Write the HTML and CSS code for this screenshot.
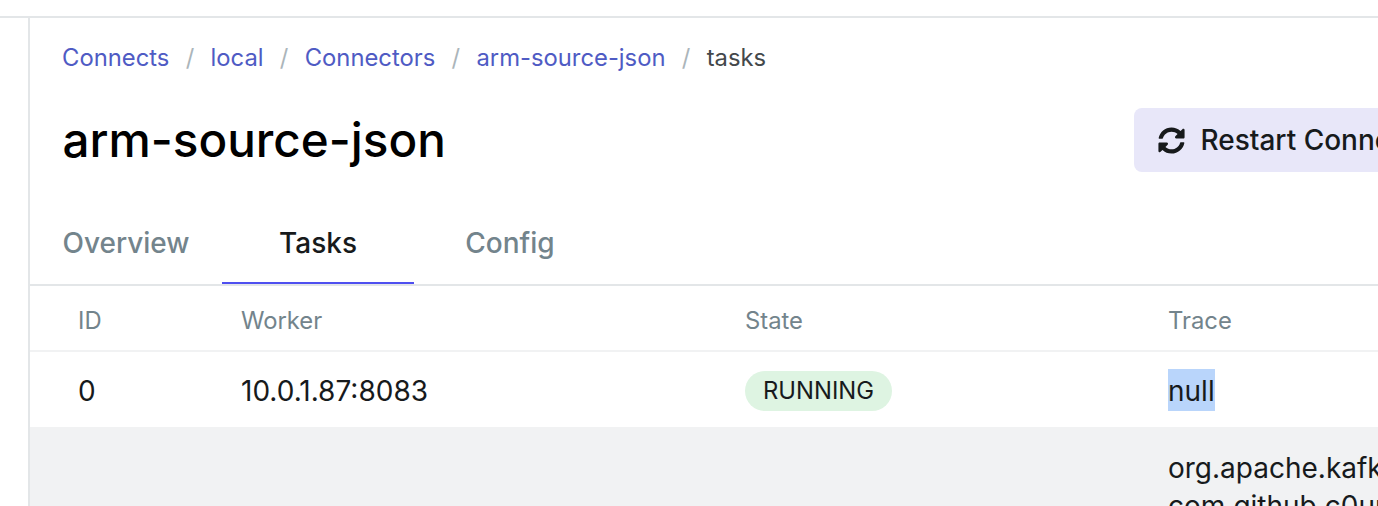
FILE: index.html
```html
<!DOCTYPE html>
<html>

<head>
    <meta charset="utf-8" />
    <title>arm-source-json tasks</title>
    <link rel="stylesheet" href="styles.css">
</head>

<body>
    <div class="top-bar"></div>
    <div class="layout">
        <div class="side"></div>
        <main class="content">
            <nav class="breadcrumb">
                <a href="#">Connects</a><span class="sep">/</span>
                <a href="#">local</a><span class="sep">/</span>
                <a href="#">Connectors</a><span class="sep">/</span>
                <a href="#">arm-source-json</a><span class="sep">/</span>
                <span class="current">tasks</span>
            </nav>
            <div class="page-head">
                <h1>arm-source-json</h1>
                <button class="btn-restart" type="button">
                    <svg class="icon" viewBox="0 0 512 512" width="27" height="27">
                        <path fill="currentColor" d="M370.72 133.28C339.458 104.008 298.888 87.962 255.848 88c-77.458.068-144.328 53.178-162.791 126.85-1.344 5.363-6.122 9.15-11.651 9.15H24.103c-7.498 0-13.194-6.807-11.807-14.176C33.933 94.924 134.813 8 256 8c66.448 0 126.791 26.136 171.315 68.685L463.03 40.97C478.149 25.851 504 36.559 504 57.941V192c0 13.255-10.745 24-24 24H345.941c-21.382 0-32.09-25.851-16.971-40.971l41.75-41.749zM32 296h134.059c21.382 0 32.09 25.851 16.971 40.971l-41.75 41.75c31.262 29.273 71.835 45.319 114.876 45.28 77.418-.07 144.315-53.144 162.787-126.849 1.344-5.363 6.122-9.15 11.651-9.15h57.304c7.498 0 13.194 6.807 11.807 14.176C478.067 417.076 377.187 504 256 504c-66.448 0-126.791-26.136-171.315-68.685L48.97 471.03C33.851 486.149 8 475.441 8 454.059V320c0-13.255 10.745-24 24-24z"/>
                    </svg>
                    Restart Connector
                </button>
            </div>
            <div class="tabs">
                <a class="tab" href="#">Overview</a>
                <a class="tab active" href="#">Tasks</a>
                <a class="tab" href="#">Config</a>
            </div>
            <table class="tasks">
                <thead>
                    <tr>
                        <th class="col-id">ID</th>
                        <th class="col-worker">Worker</th>
                        <th class="col-state">State</th>
                        <th>Trace</th>
                    </tr>
                </thead>
                <tbody>
                    <tr class="task-row">
                        <td>0</td>
                        <td>10.0.1.87:8083</td>
                        <td><span class="tag">RUNNING</span></td>
                        <td><span class="selected">null</span></td>
                    </tr>
                    <tr class="trace-row">
                        <td colspan="3"></td>
                        <td class="trace">org.apache.kafka.connect.errors.ConnectException<br>com.github.c0urante.kafka.connect</td>
                    </tr>
                </tbody>
            </table>
        </main>
    </div>
</body>

</html>
```

FILE: styles.css
```css
html,
body {
    margin: 0;
    height: 100%;
    overflow: hidden;
}

body {
    background-color: white;
    font-family: Inter, "Liberation Sans", sans-serif;
    color: #171a1c;
}

.top-bar {
    height: 16px;
    border-bottom: 2px solid #e3e6e8;
}

.layout {
    display: flex;
    height: 488px;
}

.side {
    width: 28px;
    flex: none;
    border-right: 2px solid #e3e6e8;
}

.content {
    flex: 1;
    min-width: 0;
}

.breadcrumb {
    display: flex;
    align-items: center;
    padding: 26px 0 0 32px;
    height: 28px;
    font-size: 23.8px;
    line-height: 28px;
}

.breadcrumb a {
    color: #4f5bc4;
    text-decoration: none;
}

.sep {
    color: #abb5ba;
    margin: 0 16.3px;
}

.current {
    color: #44484b;
}

.page-head {
    display: flex;
    justify-content: space-between;
    padding: 36px 0 0 32.5px;
    height: 64px;
}

h1 {
    margin: 0;
    font-size: 47.6px;
    line-height: 64px;
    font-weight: 500;
    color: black;
}

.btn-restart {
    display: flex;
    align-items: center;
    flex: none;
    width: 300px;
    height: 64px;
    margin-right: -56px;
    padding: 0 24px;
    border: 0;
    border-radius: 8px;
    background-color: #e8e7f9;
    color: #171a1c;
    font-family: inherit;
    font-size: 28px;
    font-weight: 500;
    white-space: nowrap;
    overflow: hidden;
}

.icon {
    flex: none;
    margin-right: 15.5px;
}

.tabs {
    display: flex;
    margin-top: 32px;
    height: 80px;
    border-bottom: 2px solid #e3e6e8;
}

.tab {
    width: 192px;
    height: 80px;
    line-height: 78px;
    text-align: center;
    font-size: 28px;
    font-weight: 500;
    color: #73848c;
    text-decoration: none;
    box-sizing: border-box;
}

.tab.active {
    color: #171a1c;
    border-bottom: 2px solid #4f4ff0;
}

.tasks {
    width: 1348px;
    table-layout: fixed;
    border-collapse: collapse;
    font-size: 28px;
}

.col-id {
    width: 163px;
}

.col-worker {
    width: 504px;
}

.col-state {
    width: 423px;
}

th,
td {
    box-sizing: border-box;
    padding: 0 0 0 48px;
    text-align: left;
    white-space: nowrap;
    overflow: hidden;
}

th {
    height: 65px;
    padding-top: 4px;
    font-size: 23.8px;
    font-weight: 400;
    color: #73848c;
    border-bottom: 2px solid #f1f2f3;
}

.task-row td {
    height: 76px;
    padding-top: 2px;
}

.tag {
    display: inline-block;
    height: 40px;
    line-height: 40px;
    padding: 0 18px;
    border-radius: 20px;
    background-color: #def4e2;
    font-size: 23.8px;
    vertical-align: middle;
}

.selected {
    display: inline-block;
    height: 42px;
    line-height: 44px;
    margin-top: -2px;
    background-color: #b9d5fb;
    vertical-align: middle;
}

.trace-row td {
    background-color: #f1f2f3;
}

.trace {
    padding-top: 21.5px;
    line-height: 38px;
}
```
